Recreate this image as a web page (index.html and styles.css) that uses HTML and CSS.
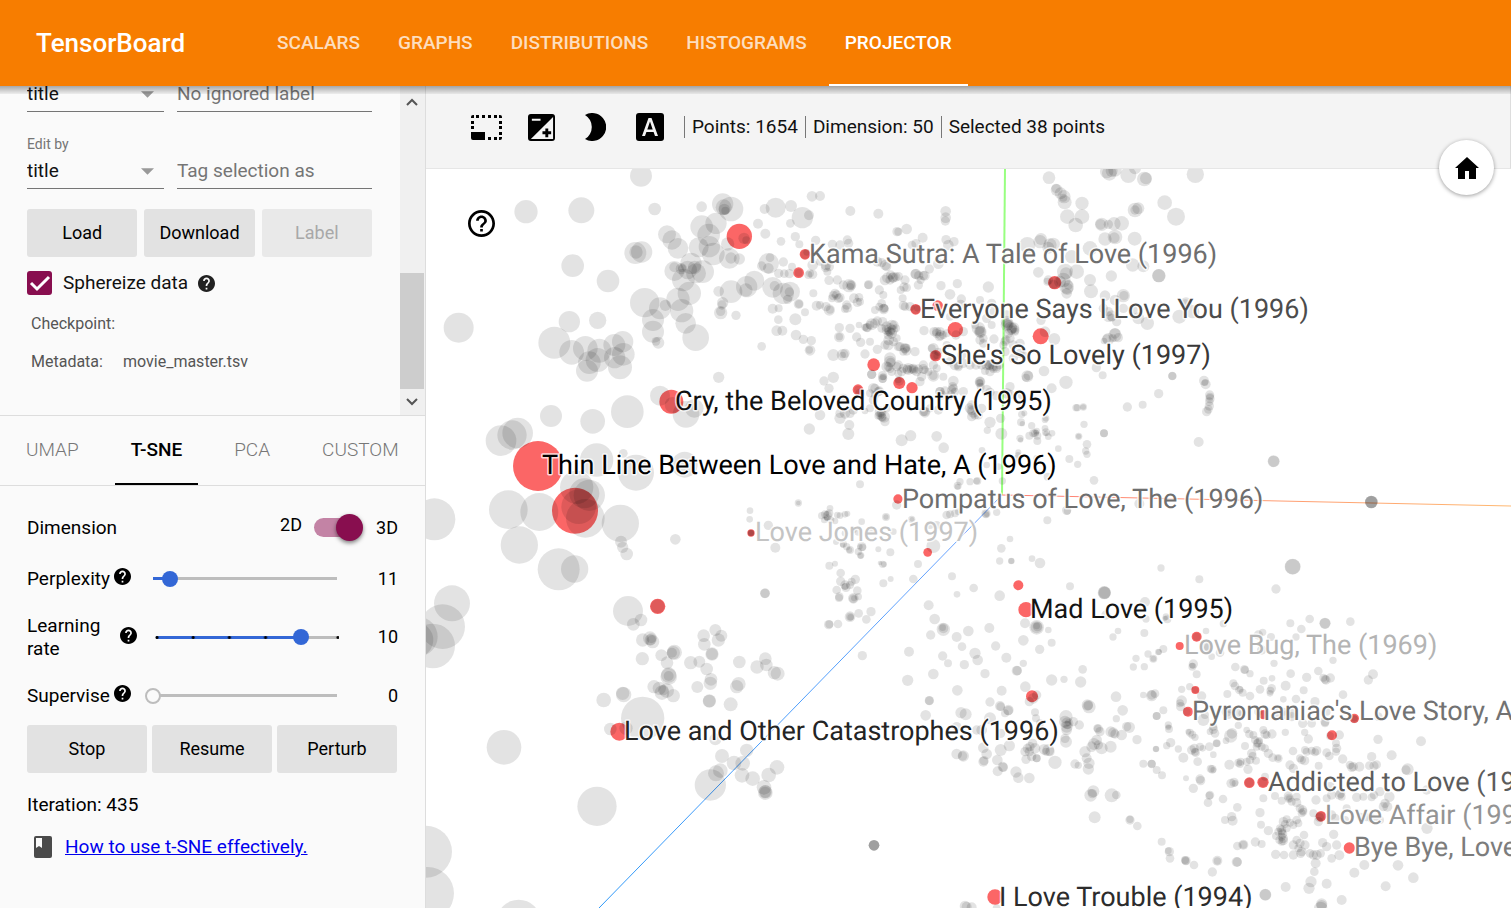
FILE: index.html
```html
<!DOCTYPE html>
<html lang="en">
<head>
<meta charset="utf-8">
<title>TensorBoard</title>
<link rel="stylesheet" href="styles.css">
</head>
<body>
<svg class="defs" aria-hidden="true">
  <symbol id="help" viewBox="2 2 20 20"><path d="M12 2C6.48 2 2 6.48 2 12s4.48 10 10 10 10-4.48 10-10S17.52 2 12 2zm1 17h-2v-2h2v2zm2.07-7.75l-.9.92C13.45 12.9 13 13.5 13 15h-2v-.5c0-1.1.45-2.1 1.17-2.83l1.24-1.26c.37-.36.59-.86.59-1.41 0-1.1-.9-2-2-2s-2 .9-2 2H8c0-2.21 1.79-4 4-4s4 1.79 4 4c0 .88-.36 1.68-.93 2.25z"/></symbol>
  <symbol id="caret" viewBox="0 0 12 6"><path d="M0 0h12L6 6z"/></symbol>
</svg>
<header class="topbar">
  <h1 class="brand">TensorBoard</h1>
  <nav class="topnav">
    <a href="#scalars">SCALARS</a>
    <a href="#graphs">GRAPHS</a>
    <a href="#distributions">DISTRIBUTIONS</a>
    <a href="#histograms">HISTOGRAMS</a>
    <a href="#projector" class="active" aria-current="page">PROJECTOR</a>
  </nav>
</header>
<main class="layout">
  <aside class="sidebar">
    <section class="data-panel">
      <div class="data-body">
        <div class="fields">
          <div class="picker">
            <select aria-label="Label by"><option>title</option></select>
            <svg class="caret"><use href="#caret"/></svg>
          </div>
          <input class="text" type="text" aria-label="Ignored label" placeholder="No ignored label">
          <label class="caption" for="edit-by">Edit by</label>
          <div class="picker">
            <select id="edit-by"><option>title</option></select>
            <svg class="caret"><use href="#caret"/></svg>
          </div>
          <input class="text" type="text" aria-label="Tag selection as" placeholder="Tag selection as">
        </div>
        <div class="buttons data-buttons">
          <button type="button">Load</button>
          <button type="button">Download</button>
          <button type="button" disabled>Label</button>
        </div>
        <div class="sphere">
          <span class="tick">
            <input type="checkbox" id="sphere" checked>
            <svg viewBox="0 0 25 24"><path d="M4 12l6 6L22 6"/></svg>
          </span>
          <label for="sphere">Sphereize data</label>
          <svg class="help soft"><use href="#help"/></svg>
        </div>
        <dl class="meta">
          <dt>Checkpoint:</dt><dd></dd>
          <dt>Metadata:</dt><dd>movie_master.tsv</dd>
        </dl>
      </div>
      <div class="scrollbar" aria-hidden="true">
        <svg viewBox="0 0 12 10"><path d="M1 8l5-5 5 5"/></svg>
        <span class="thumb"></span>
        <svg viewBox="0 0 12 10"><path d="M1 2l5 5 5-5"/></svg>
      </div>
    </section>
    <nav class="methods">
      <button type="button">UMAP</button>
      <button type="button" class="active">T-SNE</button>
      <button type="button">PCA</button>
      <button type="button">CUSTOM</button>
    </nav>
    <section class="tsne">
      <div class="row row-dimension">
        <label class="name" for="dim">Dimension</label>
        <span class="two-d">2D</span>
        <input class="switch" type="checkbox" id="dim" checked>
        <span class="value">3D</span>
      </div>
      <div class="row">
        <label class="name" for="perplexity">Perplexity</label>
        <svg class="help"><use href="#help"/></svg>
        <input class="slider perplexity" type="range" id="perplexity" min="0" max="1000" value="92">
        <output class="value">11</output>
      </div>
      <div class="row row-rate">
        <label class="name" for="rate">Learning rate</label>
        <svg class="help"><use href="#help"/></svg>
        <input class="slider rate" type="range" id="rate" min="0" max="5" value="4">
        <output class="value">10</output>
      </div>
      <div class="row">
        <label class="name" for="supervise">Supervise</label>
        <svg class="help"><use href="#help"/></svg>
        <input class="slider supervise" type="range" id="supervise" min="0" max="100" value="0">
        <output class="value">0</output>
      </div>
      <div class="buttons run-buttons">
        <button type="button">Stop</button>
        <button type="button">Resume</button>
        <button type="button">Perturb</button>
      </div>
      <p class="iteration">Iteration: 435</p>
      <p class="guide">
        <svg viewBox="0 0 18 22"><rect width="18" height="22" rx="2"/><path d="M2 2h6v10l-3-2-3 2z"/></svg>
        <a href="#guide">How to use t-SNE effectively.</a>
      </p>
    </section>
  </aside>
  <section class="stage">
    <div class="toolbar">
      <div class="tools">
        <button type="button" aria-label="Bounding box selection"><svg width="31" height="25" viewBox="0 0 31 25"><path d="M0 17h14v8H2a2 2 0 0 1-2-2zM2 0h1v3H0V2a2 2 0 0 1 2-2zM5 0h3v3H5zM11 0h3v3h-3zM17 0h3v3h-3zM23 0h3v3h-3zM28 0h1a2 2 0 0 1 2 2v1h-3zM0 6h3v3H0zM0 11h3v3H0zM28 6h3v3h-3zM28 11h3v3h-3zM28 17h3v3h-3zM28 22h3v1a2 2 0 0 1-2 2h-1zM23 22h3v3h-3zM17 22h3v3h-3z"/></svg></button>
        <button type="button" aria-label="Edit selection"><svg width="27" height="27" viewBox="0 0 28 28"><rect x="0" y="0" width="28" height="28" rx="3"/><path fill="#f4f4f4" d="M26 3v23H3zM4 5h9v2H4z"/><path d="M18 15h3v3h3v3h-3v3h-3v-3h-3v-3h3z"/></svg></button>
        <button type="button" aria-label="Night mode"><svg width="21" height="28" viewBox="0 0 21 28"><path d="M0 2a14 14 0 1 1 0 24 14 14 0 0 0 0-24z"/></svg></button>
        <button type="button" aria-label="3D labels mode"><svg width="28" height="28" viewBox="0 0 28 28"><rect width="28" height="28" rx="3"/><path fill="#f4f4f4" d="M12.500 5h3L22 23h-3l-1.400-4h-7.200L9 23H6zM14 8.500L11.300 16.500h5.400z"/></svg></button>
      </div>
      <div class="stats">
        <span>Points: 1654</span>
        <span>Dimension: 50</span>
        <span>Selected 38 points</span>
      </div>
      <button type="button" class="home" aria-label="Reset zoom"><svg width="24" height="22" viewBox="0 0 24 22"><path d="M12 0l12 11h-3v11h-7v-8h-4v8H3V11H0z"/></svg></button>
    </div>
    <div class="scatter">
      <svg class="plot" role="img" aria-label="t-SNE projection">
        <defs>
          <linearGradient id="x-axis" gradientUnits="userSpaceOnUse" x1="576" y1="0" x2="1085" y2="0"><stop offset="0" stop-color="#ff7c74"/><stop offset="1" stop-color="#ffb870"/></linearGradient>
          <linearGradient id="z-axis" gradientUnits="userSpaceOnUse" x1="576" y1="0" x2="173" y2="0"><stop offset="0" stop-color="#70a4ff"/><stop offset="1" stop-color="#2d98f8"/></linearGradient>
        </defs>
        <g id="selected" class="selected"></g>
        <g class="axes">
          <path class="y" d="M579 0L576 326"/>
          <path stroke="url(#x-axis)" d="M576 326L1085 337"/>
          <path stroke="url(#z-axis)" d="M576 326L173 739"/>
        </g>
        <g id="points" class="points"></g>
        <g class="labels">
          <text x="329" y="372" fill="#c4c4c4">Love Jones (1997)</text>
          <text x="758" y="485" fill="#b4b4b4">Love Bug, The (1969)</text>
          <text x="899" y="655" fill="#949494">Love Affair (1994)</text>
          <text x="928" y="687" fill="#7c7c7c">Bye Bye, Love (1995)</text>
          <text x="766" y="551" fill="#727272">Pyromaniac's Love Story, A (1995)</text>
          <text x="476" y="339" fill="#6e6e6e">Pompatus of Love, The (1996)</text>
          <text x="383" y="94" fill="#6e6e6e">Kama Sutra: A Tale of Love (1996)</text>
          <text x="842" y="622" fill="#5c5c5c">Addicted to Love (1997)</text>
          <text x="494" y="149" fill="#4c4c4c">Everyone Says I Love You (1996)</text>
          <text x="515" y="195" fill="#383838">She's So Lovely (1997)</text>
          <text x="573" y="737" fill="#2c2c2c">I Love Trouble (1994)</text>
          <text x="198" y="571" fill="#242424">Love and Other Catastrophes (1996)</text>
          <text x="604" y="449" fill="#141414">Mad Love (1995)</text>
          <text x="249" y="241" fill="#101010">Cry, the Beloved Country (1995)</text>
          <text x="116" y="305" fill="#000">Thin Line Between Love and Hate, A (1996)</text>
        </g>
      </svg>
      <button type="button" class="plot-help" aria-label="Help"><svg width="27" height="27" viewBox="2 2 20 20"><path d="M11 18h2v-2h-2v2zm1-16C6.480 2 2 6.480 2 12s4.480 10 10 10 10-4.480 10-10S17.520 2 12 2zm0 18c-4.410 0-8-3.590-8-8s3.590-8 8-8 8 3.590 8 8-3.590 8-8 8zm0-14c-2.210 0-4 1.790-4 4h2c0-1.100.9-2 2-2s2 .9 2 2c0 2-3 1.750-3 5h2c0-2.250 3-2.500 3-5 0-2.210-1.790-4-4-4z"/></svg></button>
    </div>
  </section>
</main>
<script src="points.js"></script>
</body>
</html>
```

FILE: styles.css
```css
* { box-sizing: border-box; }
body { margin: 0; height: 100vh; display: flex; flex-direction: column; overflow: hidden; font: 19px/24px Roboto, "Liberation Sans", sans-serif; color: #111; background: #fff; }
button, input, select { font: inherit; color: inherit; }
button { cursor: pointer; border: 0; }
.defs { position: absolute; width: 0; height: 0; }

.topbar { position: relative; z-index: 2; flex: none; display: flex; align-items: stretch; height: 86px; padding-left: 36px; background: #f77d00; color: #fff; }
.topbar::after { content: ""; position: absolute; left: 0; right: 0; top: 100%; height: 8px; background: linear-gradient(rgba(0, 0, 0, .33), rgba(0, 0, 0, .05)); }
.brand { margin: 0; width: 225px; font-size: 26px; font-weight: 500; line-height: 86px; }
.topnav { display: flex; gap: 6px; }
.topnav a { padding: 0 16px; line-height: 85px; font-size: 19px; font-weight: 500; color: rgba(255, 255, 255, .75); text-decoration: none; }
.topnav .active { color: #fff; border-bottom: 2px solid #fff; }

.layout { flex: 1; min-height: 0; display: flex; }
.sidebar { flex: none; width: 426px; display: flex; flex-direction: column; background: #fafafa; border-right: 1px solid #ddd; }
.data-panel { flex: none; height: 330px; display: flex; border-bottom: 1px solid #ddd; overflow: hidden; }
.data-body { flex: 1; display: flex; flex-direction: column; justify-content: flex-end; padding: 0 28px 41px 27px; }
.fields { display: grid; grid-template-columns: 137fr 195fr; column-gap: 13px; }
.caption { grid-column: 1 / -1; margin-top: 23px; font-size: 14px; line-height: 18px; color: #757575; }
.picker { position: relative; }
.picker select { width: 100%; height: 36px; padding: 0; border: 0; border-bottom: 1px solid #757575; background: none; appearance: none; }
.caret { position: absolute; right: 10px; top: 15px; width: 13px; height: 7px; fill: #999; pointer-events: none; }
.text { min-width: 0; height: 36px; padding: 0; border: 0; border-bottom: 1px solid #757575; background: none; }
.text::placeholder { color: #757575; }
.buttons { display: grid; grid-template-columns: repeat(3, 1fr); font-size: 18px; }
.buttons button { height: 48px; padding: 0; border-radius: 3px; background: #e2e2e2; color: #000; }
.buttons button:disabled { background: #e9e9e9; color: #a8a8a8; }
.data-buttons { gap: 7px; margin-top: 20px; }
.sphere { display: flex; align-items: center; height: 24px; margin-top: 14px; }
.sphere label { margin: 0 10px 0 11px; }
.tick { position: relative; display: flex; }
.tick input { width: 25px; height: 24px; margin: 0; appearance: none; border-radius: 3px; background: #880e4f; }
.tick svg { position: absolute; inset: 0; fill: none; stroke: #fff; stroke-width: 3; pointer-events: none; }
.help { flex: none; width: 17px; height: 17px; fill: #000; }
.soft { fill: #212121; }
.meta { display: grid; grid-template-columns: 92px 1fr; row-gap: 14px; margin: 17px 0 0; padding-left: 4px; font-size: 16px; color: #555; }
.meta dd { margin: 0; }
.scrollbar { flex: none; width: 25px; display: flex; flex-direction: column; align-items: center; justify-content: space-between; padding: 11px 1px 8px 0; background: #f0f0f0; }
.scrollbar svg { width: 12px; height: 10px; fill: none; stroke: #555; stroke-width: 2; }
.scrollbar .thumb { width: 100%; height: 116px; margin: 158px 0 0; background: #cdcdcd; }

.methods { flex: none; display: flex; gap: 20px; height: 70px; padding-left: 10px; border-bottom: 1px solid #ddd; }
.methods button { padding: 0 16px; background: none; font-weight: 300; color: #777; border-bottom: 2px solid transparent; }
.methods .active { font-weight: 500; color: #000; border-bottom-color: #000; }

.tsne { flex: 1; padding: 16px 27px 0 27px; color: #000; }
.row { display: flex; align-items: center; height: 51px; }
.row .help { margin: 0 0 4px 4px; }
.row .slider { margin-left: auto; }
.row .value { width: 53px; text-align: right; font-size: 18px; }
.row-dimension .name { flex: 1; }
.row-dimension .value { width: 36px; }
.two-d { margin: 0 12px 5px 0; font-size: 18px; }
.row-rate { height: 66px; }
.row-rate .name { width: 84px; line-height: 23px; }
.row-rate .help { margin-left: 9px; }
.row-rate .slider { width: 197px; }
.switch { position: relative; width: 48px; height: 19px; margin: 0; appearance: none; border-radius: 10px; background: #c383a5; }
.switch::before { content: ""; position: absolute; right: -1px; top: -4px; width: 27px; height: 27px; border-radius: 50%; background: #880e4f; box-shadow: 0 2px 4px rgba(0, 0, 0, .5); }
.slider { --track: #bdbdbd; flex: none; width: 200px; height: 16px; margin: 0; appearance: none; background: linear-gradient(90deg, #3367d6 var(--fill), var(--track) var(--fill)) center / calc(100% - 16px) 3px no-repeat; }
.slider::-webkit-slider-thumb { width: 16px; height: 16px; appearance: none; border: 0; border-radius: 50%; background: #3367d6; }
.perplexity { --fill: 9%; }
.rate { --fill: 80%; background: radial-gradient(circle at 2px 50%, #000 1px, transparent 2px) 7px 50% / calc((100% - 16px) / 5) 3px repeat-x, linear-gradient(90deg, #3367d6 80%, #bdbdbd 80%) center / calc(100% - 16px) 3px no-repeat; clip-path: inset(0 6px); }
.supervise { --fill: 0%; }
.supervise::-webkit-slider-thumb { border: 2px solid #bdbdbd; background: #fafafa; }
.run-buttons { gap: 5px; margin: 4px 1px 0 0; }
.iteration { margin: 20px 0 0; }
.guide { display: flex; align-items: center; gap: 13px; margin: 18px 0 0 7px; }
.guide svg { width: 18px; height: 22px; fill: #4a4a4a; }
.guide path { fill: #fafafa; }
.guide a { color: #00e; }

.stage { flex: 1; min-width: 0; display: flex; flex-direction: column; }
.toolbar { position: relative; z-index: 1; flex: none; display: flex; align-items: center; height: 83px; padding: 0 0 0 45px; background: #f4f4f4; border-bottom: 1px solid #e6e6e6; border-right: 1px solid #ddd; }
.tools { display: flex; gap: 26px; align-items: center; }
.tools button { display: flex; padding: 0; background: none; }
.tools button:nth-child(3) { margin: 0 4px 0 4px; }
.stats { display: flex; margin-left: 20px; }
.stats span { padding: 0 7px; line-height: 22px; border-left: 1px solid #777; }
.home { position: absolute; right: 16px; bottom: -27px; width: 55px; height: 55px; display: flex; align-items: center; justify-content: center; padding: 0; border-radius: 50%; background: #fff; box-shadow: 0 1px 4px rgba(0, 0, 0, .4); }
.scatter { position: relative; flex: 1; min-height: 0; overflow: hidden; background: #fff; }
.plot { display: block; width: 100%; height: 100%; }
.plot-help { position: absolute; left: 42px; top: 41px; display: flex; padding: 0; background: none; }
.points circle { fill: #000; fill-opacity: .11; }
.selected { fill: #fb6666; }
.axes path { stroke-width: 1; fill: none; }
.axes .y { stroke: #98ff80; stroke-width: 2; }
.labels { font-size: 27px; stroke: rgba(255, 255, 255, .75); stroke-width: 3px; stroke-linejoin: round; paint-order: stroke; text-rendering: geometricPrecision; }
```

FILE: points.js
```js
// Each group holds its origin in pixels and a flat list of x,y,r triples in thirds of a pixel.
const selected = [
  [0, 1, "940,199,38 736,695,36 336,888,75 447,1022,69 975,1089,11"],
  [364, -4, "45,268,16 26,323,16 377,433,16 443,422,16 496,494,23 752,514,24 437,572,17 251,599,19 328,654,18 366,668,17 204,674,16 794,353,20 324,1002,14"],
  [0, 371, "695,199,23 580,575,27"],
  [364, 361, "413,67,13 685,166,15 708,239,23 726,499,18 615,1101,23"],
  [724, 361, "89,348,12 140,320,15 136,480,12 114,545,15 340,554,14 613,565,14 546,616,15 298,758,16 339,757,17 513,859,16 598,954,17"]
];
const points = [
  [0, 1, `645,17,33 300,125,35 466,121,39 686,117,19 827,110,16 890,102,32 915,117,37 895,118,17 893,112,24 898,122,12
827,170,34 870,160,32 848,195,34 723,193,27 738,210,29 756,235,31 628,249,33 647,246,32 630,246,20 440,287,34 546,333,34
818,232,30 850,230,32 862,252,34 910,265,31 915,264,17 940,267,17 905,222,20 954,205,17 961,211,12 745,303,30 766,296,17 768,295,12 795,280,32 806,292,20 830,305,34 810,310,30 772,330,34 785,300,28 745,292,15 790,370,35 756,388,35 656,398,44 702,415,33 718,406,17 767,422,35 681,450,33 681,485,33 779,460,31 809,503,40 697,518,18 690,514,13
430,455,32 515,451,26 385,518,48 437,547,37 478,535,37 520,542,36 515,570,36 490,578,34 483,602,33 565,525,33 590,515,32 592,553,34 566,563,32 582,592,36 98,473,45
878,622,17 375,738,33 500,754,37 604,725,49 702,677,30 740,705,24 780,733,40 805,715,28 225,812,46 258,795,44 275,789,46 512,870,50 630,908,54 776,884,39 592,850,13 452,952,50 475,970,45 490,976,47 247,1019,58 340,1026,57 583,1060,56 25,1048,63 280,1125,56 478,1045,58 458,1010,52
972,1022,10 971,1048,10 1027,1066,14 748,1108,16 585,1115,18 975,1089,10 975,1089,9 975,1089,9
1016,117,15 1049,113,30 1095,108,18 996,161,15 1018,191,15 1065,214,13 1093,160,13 1028,280,31 1032,263,13 1007,288,14 1027,295,16 1072,276,14 1098,290,12 1058,310,14 1075,311,13 1090,311,14 985,332,30 962,350,32 960,360,20 915,365,34 878,364,16 890,398,17 888,405,14 884,428,20 884,424,14 930,436,14 1040,352,31 1046,348,15 1072,370,32 1090,366,14 1085,388,14 1040,416,15 1058,415,12 1057,449,13 1052,482,16 1069,482,15 1007,529,13`],
  [364, 56, `0,200,30 26,237,15 45,262,12 90,240,12 145,220,14 135,205,14 170,240,14 183,180,12 142,165,14 55,150,12 107,128,14 290,125,14 308,158,15 285,165,16 350,188,13 342,186,14 385,180,14 378,147,16 400,152,14 281,250,14 275,235,13 345,245,13 360,245,14 230,308,13 255,295,15 275,310,13 290,315,15 300,320,15 305,300,16 295,330,14
295,360,16 325,365,14 345,370,14 350,378,14 300,400,18 290,425,16 300,430,14 320,425,14 335,440,14 352,433,14 370,430,14 400,432,15 380,440,14 278,452,14 278,462,12 245,448,14 395,455,14 415,440,12 450,320,14 440,320,14 425,370,12 490,468,16 488,485,14 485,495,14 450,500,14 505,425,14 570,470,14 568,475,12 598,420,16 610,430,14 620,425,14 570,320,18 570,345,14 580,355,13 650,290,18 655,300,16 665,310,16 675,315,14 660,340,14 645,350,14
255,490,14 265,500,14 275,575,14 270,570,14 150,565,14 405,560,14 545,555,16 555,570,14 590,280,14 545,540,14 240,350,12 165,385,14 70,205,12 210,230,12 235,180,12 325,20,12 480,275,12 520,320,14 515,390,14 430,420,14 210,505,14 160,520,14 460,455,12 520,500,14`],
  [364, -4, `66,94,16 90,93,15 37,158,32 57,151,15 181,138,15 265,146,15 467,139,16 467,158,16 466,168,14 321,200,14 350,192,16 16,215,14 28,238,12 77,226,14 127,238,14 150,240,14 172,225,14 176,235,14 398,218,15 378,236,14 366,240,13 468,224,14 475,240,16 492,230,14
45,268,14 50,262,10 26,323,12 377,433,14 382,430,10 437,572,14 445,560,12 440,572,10 328,648,14 325,645,10 204,674,12 794,353,18 790,358,14
68,300,16 108,300,16 118,305,14 68,328,14 112,320,12 117,346,14 60,325,12 90,290,12 177,362,20 183,360,16 181,365,11 160,360,14 236,359,14 130,392,14 140,390,14 150,398,14 126,400,12 192,400,15 202,412,14 207,397,13 118,435,17 120,434,12 108,425,14 80,422,15 172,428,15 165,432,12 16,463,18 27,417,12
262,290,15 275,293,14 286,300,16 292,338,16 302,330,14 310,337,16 318,336,14 326,334,13 345,345,14 300,345,14 376,327,15 386,332,14 392,345,12 404,332,15 418,312,14 445,296,16 453,362,14 502,356,14 480,388,16 514,402,14 512,418,14 595,366,17 268,375,14 280,390,12 332,375,12 338,400,12 340,422,14 281,432,16 283,430,12 268,425,12 255,435,12
148,488,14 180,490,14 148,516,16 148,515,11 207,480,10 245,478,18 240,480,13 232,488,14 225,487,11 262,468,14 278,470,14 290,485,16 300,492,18 308,495,16 312,480,14 305,505,16 295,500,13 318,490,12 18,510,16 40,523,14 64,527,14 60,556,16 58,555,11 130,570,18 158,570,18 158,570,10 200,516,14 212,532,14 225,567,14 262,553,14 296,525,16 310,530,14 320,520,12 285,540,14 330,545,14 345,550,16 350,548,12 375,560,14 340,560,12 402,497,14 432,500,14 440,505,14 448,515,14 452,510,16 460,510,12 470,505,12 430,550,16 432,572,14 470,540,12 498,510,14
565,490,20 572,500,18 570,500,14 580,520,13 555,480,12 612,522,14 605,480,12 650,480,18 655,475,16 662,490,20 665,495,14 672,488,16 675,500,12 655,505,14 648,525,14 640,540,12 670,540,14 645,560,14 610,440,12 570,405,12 605,415,14 650,450,14
300,590,18 302,592,14 295,605,14 325,600,14 340,610,14 355,612,18 356,612,11 365,612,14 372,615,14 385,612,14 400,600,14 405,615,12 305,620,13 325,625,12 245,628,14 278,640,14 280,635,10 390,650,14 430,632,18 430,632,13 440,610,12 480,590,14 495,600,16 505,602,12 520,595,14 540,600,14 558,600,14 575,600,14 590,600,16 598,600,14 598,598,10 608,605,14 620,610,14 585,618,12 600,620,14 628,600,13
102,648,14 130,637,17 117,670,14 240,685,12 250,670,16 268,678,14 255,690,12 250,705,14 570,650,16 570,652,10 572,665,12 590,675,16 600,682,14 618,692,14 450,680,14 465,678,14 490,670,14 455,690,14 482,690,14 495,680,12
90,750,16 150,760,17 165,745,16 180,745,14 190,735,14 178,780,15 175,807,18 58,792,17 270,740,16 275,745,14 282,755,18 278,758,12 285,770,14 265,752,12 290,730,12 240,730,12 225,738,10 400,740,14 405,742,16 445,735,14 420,730,12 335,826,18 362,812,17 440,814,16 461,848,16 540,730,16 550,740,18 565,750,14 545,755,14 575,730,14 600,772,17 592,796,11 632,760,14 634,806,18 576,856,10
777,38,19 800,75,18 798,70,14 812,85,18 822,95,20 824,112,21 820,98,12 876,115,20 832,155,22 876,155,22 857,180,22 958,25,22 965,18,18 975,15,20 950,20,20 1015,30,24 1035,10,18 1063,42,22 1045,130,18 1035,135,22 1035,135,14 935,178,20 932,178,16 995,175,22 972,176,20 955,178,14 975,216,22 973,218,16 1034,221,21 945,222,20
753,222,18 750,230,20 712,240,24 780,240,20 790,238,20 775,248,18 900,250,22 845,275,20 745,322,16 825,320,24 828,325,18 860,320,22 820,345,22 810,350,18 830,365,22 832,372,18 830,385,16 835,360,14 775,345,14 772,350,12 900,345,18 903,379,21 964,333,17 945,392,16 975,405,16 1000,392,20 1002,392,14 1028,300,20 1060,304,18 1106,332,20 940,430,14 955,455,16 965,452,16 965,458,12 955,440,14 980,470,14 1000,430,14 1045,460,18 1072,475,20 975,510,20 975,505,16 985,518,14 955,522,18 950,522,14 968,520,12 942,528,10 1028,435,15 753,466,14 765,500,16 793,522,18 690,565,14 690,535,14
762,618,16 712,634,18 715,632,14 708,638,12 785,670,15 828,652,20 919,608,14 938,631,12 660,665,14 660,688,14 650,685,16 695,690,12 670,580,14 700,570,12
858,728,11 862,728,11 880,726,11 880,726,8 1012,726,14 1058,719,12 882,778,11 866,814,11 866,814,8 942,805,12 942,805,12 891,838,13 887,858,11 891,868,11 838,882,12 863,898,11 912,946,13 805,851,10
695,748,11 703,745,9 693,772,12 697,776,8 725,782,11 765,764,10 768,760,10 690,820,11 692,825,8 718,812,12 730,805,12 735,805,12 738,803,9 742,812,12 742,828,12 768,802,12 768,805,8 786,805,10 775,815,10 765,790,10 740,798,10
685,862,9 684,870,9 680,880,10 740,880,10 637,948,11 773,935,12 590,900,10 625,905,10 562,948,12 560,948,10 510,950,11 503,962,12 503,965,9 540,950,11 210,958,12 320,1020,14 25,1014,11 25,1014,7
95,1052,11 105,1048,12 112,1052,14 112,1058,10 118,1045,12 120,1030,10 122,1065,11 103,1065,10 110,1045,8 110,1060,8 135,1068,10 142,1050,10 150,1052,10 165,1048,10 172,1046,9 215,1070,10 288,1056,12 288,1056,8 365,1063,11 366,1063,7 470,1050,13 480,1048,12 495,1045,12 505,1040,10 588,1046,14 588,1047,11 590,1048,8 620,1042,11 830,1036,14 832,1038,11 1048,1016,15 772,1066,12 240,1098,12 310,1100,10 420,1080,12 440,1080,12 190,1095,10 165,1105,10`],
  [724, -39, `136,133,26 44,218,22 78,260,27 27,437,20 88,560,21 108,520,18 106,520,12 128,545,20 67,738,13 67,738,12 26,791,14 162,752,15 167,763,15 165,758,10 179,795,14 180,800,12 180,806,14 178,815,13 178,828,14 175,838,13 170,845,14 146,936,15 371,994,18 371,994,17 664,1116,19 664,1116,19 664,1116,19 664,1116,18 -12,145,18`],
  [0, 371, `602,42,19 590,22,17 398,88,63 446,87,41 78,190,54 50,260,67 20,318,67 -25,290,60 -30,300,52 606,213,45 622,253,19 645,240,19 650,300,20 672,295,21 673,300,17 676,295,15 680,305,20 649,356,20 706,346,18 742,338,20 745,337,23 738,338,15 723,368,19 728,405,23 728,410,25 728,408,15 684,440,20 700,445,20 708,458,22 712,450,16 722,452,22 742,467,20 590,460,20 593,464,23 533,480,22 650,535,65 553,567,19 600,565,20 695,199,21
868,270,18 833,287,19 886,287,18 877,300,20 835,313,19 858,342,20 858,342,18 794,368,20 820,365,18 842,387,19 855,418,19 853,430,20 814,441,18 850,483,20 850,483,19 940,366,19 914,493,21 938,432,21 932,440,20 1018,356,19 1021,375,19 993,381,20 1045,398,20 1055,401,21 1017,160,15 1017,160,14 1048,23,15
234,622,52 513,799,59 853,735,47 868,598,18 888,648,21 962,631,20 870,700,24 883,692,22 924,669,22 950,670,22 948,706,22 980,716,22 1053,682,22 1028,705,22 1014,742,22 1018,758,22 1018,755,20 1018,757,17 0,935,78 5,1060,79 278,1145,66`],
  [364, 361, `205,5,12 215,50,14 218,52,11 210,50,8 212,76,11 212,77,9 205,65,11 180,60,12 178,60,9 170,50,11 160,42,11 158,45,8 138,36,9 265,58,9 301,67,12 278,103,11 282,103,9 270,99,7 280,160,12 302,147,9 118,107,12 135,101,9 152,129,13 152,154,14 165,165,14 168,172,14 165,170,10 140,180,13 148,200,13 147,204,12 185,155,12 196,148,14 180,165,12 190,205,16 190,206,13 192,205,9 202,182,13 205,200,11 180,260,16 180,260,12 182,262,10 206,250,13 229,268,13 243,245,14 116,284,14 118,283,12 144,282,13 217,377,14 370,147,13 384,102,12 430,48,21 486,139,12 501,193,10 551,174,13 634,55,13 660,27,10 629,93,11 664,93,10 664,93,9 726,86,10 750,99,16 629,197,16 416,226,15 434,267,16 460,298,20 460,295,15 458,293,10 422,315,14 500,321,15 535,303,16 516,350,13 598,294,15 617,348,14 555,370,17 563,390,16 458,378,14 474,400,12 357,365,15 523,404,14 585,431,14 430,432,16 353,451,17 502,481,16 418,512,14 418,512,13 407,556,16 513,548,17 527,553,18 600,516,14 635,482,15 649,383,15 680,422,15 682,422,14 700,400,11 705,280,15 700,331,16 740,292,22 740,292,18 742,290,14 740,288,10 775,300,10 785,338,12 749,358,14 706,470,16 785,450,17 822,448,11 872,456,17 878,418,13 969,321,11 984,303,10 840,169,12 943,188,20 943,188,19 944,188,18 1065,216,15 1068,267,11 1063,309,12 1038,385,11 1030,411,11 1063,410,11 1074,372,11 1105,366,10 948,255,14
630,528,15 632,530,13 655,540,16 655,542,14 600,565,18 645,550,12 718,515,14 735,547,12 738,565,12 750,580,12 730,505,16 740,495,14 978,500,16 998,541,16 979,566,11 892,525,17 897,530,20 895,527,14 828,560,20 825,575,18 832,580,18 830,590,18 830,600,16 832,585,12 835,578,10 828,635,18 825,625,14 868,585,14 850,575,14 925,597,14 922,595,12 930,605,14 962,605,16 970,608,16 975,612,14 995,615,16 1010,590,14 1018,592,17 1041,629,14 1060,495,10 1085,497,17 1100,558,12
500,672,16 520,678,17 518,678,14 580,653,16 590,672,16 580,695,15 582,692,14 622,690,16 632,660,18 658,647,17 638,710,15 640,712,14 623,724,15 678,726,17 685,743,16 718,744,16 795,697,20 705,665,14 712,655,14 718,665,14 720,650,14 735,655,16 728,640,14 725,680,14 740,685,12 740,685,12 708,688,14 762,658,16 775,660,18 780,665,14 768,665,12 855,702,14 865,706,11 885,665,17 890,685,15 897,700,17 895,717,17 905,650,16 912,642,18 920,630,16 925,645,14 935,655,18 962,650,18 560,600,14 575,600,16 500,590,14 632,610,14
1060,701,12 1085,701,12 910,784,18 902,796,19 907,791,14 965,796,21 979,795,13 914,862,18 1020,868,11 1020,870,14 1042,888,13 252,946,16 252,946,16 252,946,16 252,946,16 525,1128,16 530,1130,15 545,1132,15 620,1135,12`],
  [724, 361, `33,114,11 148,148,12 428,110,24 428,110,23 378,177,14 525,280,17 525,280,16 479,267,13 421,280,12 454,297,13 601,275,13 220,281,11 168,303,10 48,260,10 52,268,12 45,265,8 10,386,12 10,386,9 27,366,9 40,357,12 172,350,15 175,352,13 210,368,13 185,380,10 325,315,14 338,307,11 363,321,12 438,321,11 335,360,14 372,400,11 549,391,11 130,402,14 127,410,12 127,407,9 140,433,12 256,411,13 283,418,13 285,420,12 300,431,11 505,423,13 422,431,13 470,442,14 520,443,12 525,448,13 528,450,14 541,444,14 669,433,15 655,450,14 341,452,12 366,445,10 407,467,15 361,482,12 365,475,13 360,490,10 330,478,13 250,460,12 255,468,13 268,480,13 270,478,10 278,488,12 300,498,13 232,492,12 461,481,12 400,508,10 438,507,13 495,515,14 579,494,13 119,470,11 95,478,11 155,498,14 15,491,13 5,495,14 95,512,16 90,520,12 92,530,14 40,541,12 20,558,12 55,585,11 57,597,12 55,592,9 160,570,18 165,555,12 190,598,14 190,590,12 195,610,13 180,605,10 120,608,12 127,614,12 135,622,11 115,605,9 62,638,14 50,647,11 18,657,10 18,657,9 85,657,11 100,683,15 125,660,14 133,655,14 137,668,13 135,665,12 150,650,12 158,655,10 143,695,13 178,650,13 200,640,12 200,640,11 228,632,10 242,618,20 246,610,16 190,674,10 238,704,15 182,716,12 187,718,13 190,720,9 5,702,13 20,720,12 36,736,12 108,745,9 150,747,14 152,752,14 130,775,14 180,795,13 178,797,12 174,818,13 219,807,13 262,832,13 243,760,14 252,757,14 255,760,10 225,870,12 245,860,14 248,872,15 330,848,14 333,884,12 355,902,14 35,935,12 58,965,14 55,962,10 60,985,13 105,990,12 108,992,14 107,993,12 132,1005,13 187,1026,14 202,992,15 202,993,11 260,996,15 262,996,14 262,948,13 280,944,15 280,944,12 316,936,14 335,942,12
140,320,12 136,480,10 110,545,12 340,554,12 613,568,12 613,565,10 540,618,12 298,758,14 339,757,14 513,859,14 508,862,14
230,545,15 235,555,12 240,540,10 262,550,14 265,586,11 275,550,10 298,612,13 290,600,10 325,638,14 322,640,13 328,632,11 320,650,12 315,630,12 310,615,12 340,600,12 345,612,14 350,615,12 366,612,14 335,650,12 345,655,12 355,670,14 368,683,13 385,685,13 385,684,9 305,670,14 308,678,12 300,690,13 290,695,12 272,695,12 270,702,12 265,698,12 318,692,12 294,718,14 285,648,12 406,607,11 429,663,13 420,705,14 430,715,14 450,685,12 455,690,13 464,692,14 465,660,12 470,665,12 485,662,12 500,662,14 495,667,12 506,707,12 464,607,11 475,627,14 458,580,14 485,580,13 525,575,14 525,580,12 530,545,12 568,615,14 558,640,12 560,655,14 558,665,12 530,668,13 538,678,13 578,687,14 600,705,13 605,712,14 610,710,14 628,710,15 658,707,13 665,680,14 672,708,14 680,704,13 725,676,15 813,634,15 773,718,18 768,720,14 684,628,14 685,560,13 380,550,12 410,555,14 425,560,14 425,550,14 400,545,12 325,545,12
345,740,12 340,805,12 375,798,12 395,812,12 415,798,14 417,805,14 418,806,10 425,815,12 440,800,12 440,818,14 450,835,13 458,840,14 460,845,12 455,850,12 498,810,14 530,805,12 545,795,14 568,795,14 572,790,14 575,800,12 620,802,14 640,800,12 665,802,12 672,795,13 690,785,14 718,800,16 705,820,14 700,830,14 712,830,15 590,835,12 585,870,12 632,860,12 650,862,12 665,865,14 690,870,12 540,770,14 545,855,14 555,865,14 830,780,14 831,895,17
505,875,14 490,850,12 410,868,12 420,878,12 400,875,14 405,882,12 430,885,12 440,870,13 445,880,12 390,895,12 395,900,14 396,905,12 398,912,14 395,920,12 400,925,14 385,905,12 410,895,12 395,935,12 378,918,12 388,930,12 462,915,13 440,930,13 430,945,14 450,940,14 465,945,14 445,955,12 455,965,14 400,932,14 377,973,14 402,975,13 430,975,14 452,970,14 480,970,13 490,975,14 500,975,15 512,970,13 497,1000,15 493,1025,13 483,1055,17 477,1075,17 551,913,14 518,938,14 530,950,14 560,945,14 545,985,13 568,976,15 643,1005,15 613,1028,15 744,1006,16 790,1043,16 707,1069,15 530,1061,15 575,1110,15 407,1071,15 346,1094,18 346,1094,17 515,1122,17 515,1126,16 512,1135,20`]
];

function draw(id, groups) {
  const layer = document.getElementById(id);
  for (const [ox, oy, list] of groups) {
    for (const item of list.trim().split(/\s+/)) {
      const [x, y, r] = item.split(",").map(Number);
      const dot = document.createElementNS("http://www.w3.org/2000/svg", "circle");
      dot.setAttribute("cx", ox + x / 3);
      dot.setAttribute("cy", oy + y / 3);
      dot.setAttribute("r", r / 3);
      layer.appendChild(dot);
    }
  }
}

draw("selected", selected);
draw("points", points);
```
